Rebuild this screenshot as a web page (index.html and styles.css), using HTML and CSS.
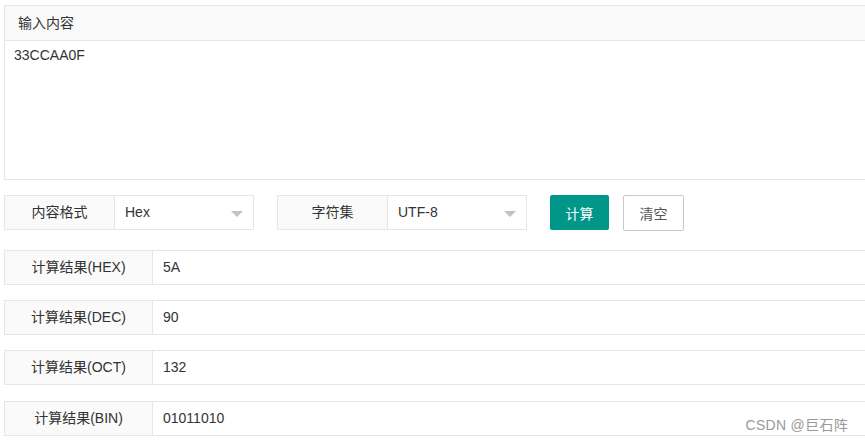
FILE: index.html
```html
<!DOCTYPE html>
<html lang="zh">
<head>
<meta charset="utf-8">
<title>计算</title>
<link rel="stylesheet" href="styles.css">
</head>
<body>
<div class="page">
  <div class="panel">
    <div class="panel-head">输入内容</div>
    <div class="panel-body">33CCAA0F</div>
  </div>

  <div class="toolbar">
    <div class="group">
      <div class="label">内容格式</div>
      <div class="select"><span>Hex</span><i class="caret"></i></div>
    </div>
    <div class="group">
      <div class="label">字符集</div>
      <div class="select"><span>UTF-8</span><i class="caret"></i></div>
    </div>
    <button class="btn btn-primary">计算</button>
    <button class="btn btn-plain">清空</button>
  </div>

  <div class="results">
    <div class="result"><div class="rlabel">计算结果(HEX)</div><div class="rvalue">5A</div></div>
    <div class="result"><div class="rlabel">计算结果(DEC)</div><div class="rvalue">90</div></div>
    <div class="result"><div class="rlabel">计算结果(OCT)</div><div class="rvalue">132</div></div>
    <div class="result"><div class="rlabel">计算结果(BIN)</div><div class="rvalue">01011010</div></div>
  </div>
</div>
<div class="watermark">CSDN @巨石阵</div>
</body>
</html>
```

FILE: styles.css
```css
html, body {
  margin: 0;
  padding: 0;
  background: #fff;
  overflow: hidden;
}
body {
  font-family: "Liberation Sans", Arial, "Noto Sans CJK SC", sans-serif;
  font-size: 14px;
  color: #333;
  width: 865px;
  height: 441px;
  position: relative;
}
.page {
  box-sizing: border-box;
  padding: 5px 0 0 4px;
  width: 865px;
}
.panel {
  border: 1px solid #e6e6e6;
  border-right: none;
}
.panel-head {
  height: 34px;
  line-height: 34px;
  padding-left: 13px;
  background: #fafafa;
  border-bottom: 1px solid #e6e6e6;
}
.panel-body {
  height: 138px;
  box-sizing: border-box;
  padding: 6px 9px;
  line-height: 17px;
  background: #fff;
}
.toolbar {
  display: flex;
  align-items: flex-start;
  margin-top: 15px;
}
.group {
  display: flex;
  margin-right: 23px;
}
.label {
  box-sizing: border-box;
  width: 111px;
  height: 35px;
  line-height: 33px;
  text-align: center;
  background: #fafafa;
  border: 1px solid #e6e6e6;
}
.select {
  box-sizing: border-box;
  width: 139px;
  height: 35px;
  line-height: 33px;
  padding-left: 10px;
  border: 1px solid #e6e6e6;
  border-left: none;
  position: relative;
  background: #fff;
}
.caret {
  position: absolute;
  right: 10px;
  top: 15px;
  width: 0;
  height: 0;
  border-left: 6px solid transparent;
  border-right: 6px solid transparent;
  border-top: 6px solid #c2c2c2;
}
.btn {
  box-sizing: border-box;
  height: 35px;
  font: inherit;
  font-size: 14px;
  padding: 0;
  cursor: pointer;
  border-radius: 2px;
}
.btn-primary {
  width: 59px;
  background: #009688;
  color: #fff;
  border: none;
  margin-right: 14px;
}
.btn-plain {
  width: 61px;
  height: 36px;
  background: #fff;
  color: #555;
  border: 1px solid #c9c9c9;
}
.results {
  margin-top: 19px;
  display: flex;
  flex-direction: column;
  gap: 15px;
}
.result {
  display: flex;
  height: 35px;
  box-sizing: border-box;
  border: 1px solid #e6e6e6;
  border-right: none;
}
.result:nth-child(4) {
  margin-top: 1px;
}
.rlabel {
  width: 147px;
  line-height: 33px;
  text-align: center;
  background: #fafafa;
  border-right: 1px solid #e6e6e6;
}
.rvalue {
  flex: 1;
  line-height: 33px;
  padding-left: 10px;
  background: #fff;
}
.watermark {
  position: absolute;
  right: 17px;
  bottom: 7px;
  font-size: 14px;
  color: #9a9a9a;
  letter-spacing: 0.3px;
}
```
